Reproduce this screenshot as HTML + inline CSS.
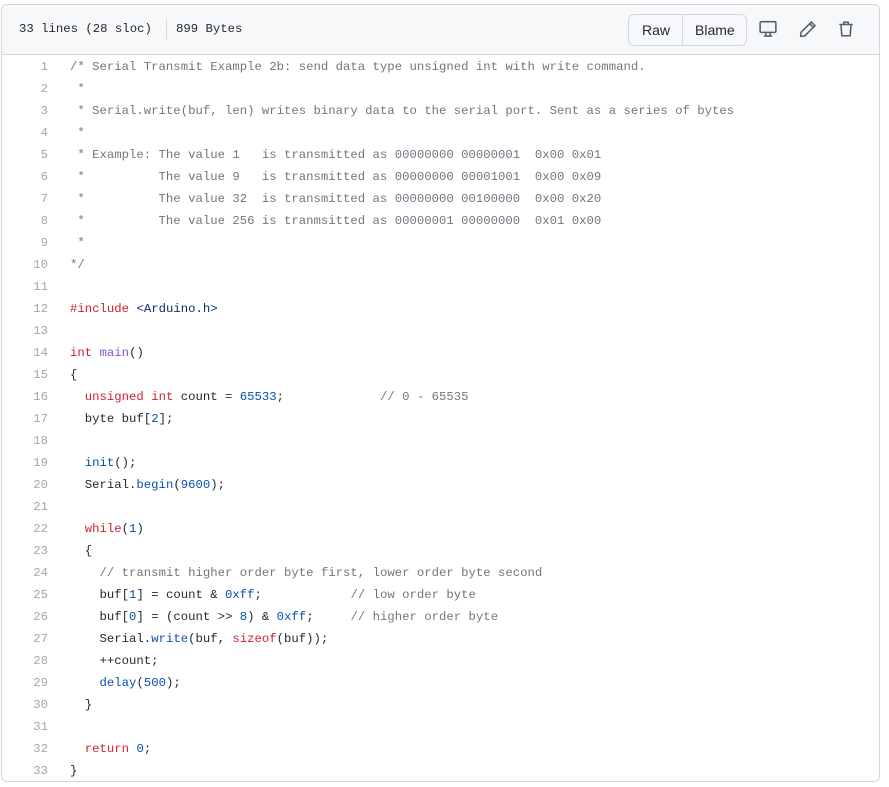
<!DOCTYPE html>
<html><head><meta charset="utf-8"><style>
body{margin:0;background:#fff;width:889px;height:787px;overflow:hidden}
.box{position:absolute;left:1px;top:4px;width:877px;height:776px;border:1px solid #d0d7de;border-radius:6px;overflow:hidden}
.hdr{height:49px;background:#f6f8fa;border-bottom:1px solid #d0d7de;position:relative;font-family:"Liberation Mono",monospace;font-size:12.3px;color:#24292f}
.hdr .t{position:absolute;left:17px;top:17px}
.sep{position:absolute;left:164px;top:14px;height:20px;border-left:1px solid #d0d7de}
.btns{position:absolute;left:626px;top:9px;height:30px;border:1px solid #d0d7de;border-radius:6px;background:#f6f8fa;font-family:"Liberation Sans",sans-serif;font-size:14px;display:flex}
.btns span{display:block;line-height:30px;padding:0 12px 0 13px}
.btns span+span{border-left:1px solid #d0d7de;padding:0 11px 0 12px}
.ic{position:absolute;top:15px}
.code{font-family:"Liberation Mono",monospace;font-size:12.3px;line-height:22px;color:#24292f;padding-top:1px}
.l{display:flex;height:22px;white-space:pre}
.n{width:46px;text-align:right;color:#a0a8b0;flex:none;padding-right:22px}
.c{color:#6e7781}.k{color:#cf222e}.b{color:#0550ae}.p{color:#8250df}.s{color:#0a3069}
</style></head><body>
<div class="box">
<div class="hdr"><span class="t">33 lines (28 sloc)</span><div class="sep"></div><span class="t" style="left:174px">899 Bytes</span>
<div class="btns"><span>Raw</span><span>Blame</span></div>
<svg class="ic" style="left:757px" width="18" height="18" viewBox="0 0 16 16" fill="none" stroke="#57606a" stroke-width="1.4"><rect x="1" y="1.5" width="14" height="9.5" rx="1"/><path d="M6 11v3M10 11v3M4.5 14.3h7"/></svg>
<svg class="ic" style="left:797px" width="18" height="18" viewBox="0 0 16 16" fill="none" stroke="#57606a" stroke-width="1.4"><path d="M11 1.8l3.2 3.2L5 14.2 1.5 14.5 1.8 11z M9.5 3.3l3.2 3.2"/></svg>
<svg class="ic" style="left:835px" width="18" height="18" viewBox="0 0 16 16" fill="none" stroke="#57606a" stroke-width="1.4"><path d="M2 4h12M6 4V2h4v2M3.5 4l.8 10h7.4l.8-10"/></svg>
</div>
<div class="code">
<div class="l"><span class="n">1</span><span class="c">/* Serial Transmit Example 2b: send data type unsigned int with write command.</span></div>
<div class="l"><span class="n">2</span><span class="c"> *</span></div>
<div class="l"><span class="n">3</span><span class="c"> * Serial.write(buf, len) writes binary data to the serial port. Sent as a series of bytes</span></div>
<div class="l"><span class="n">4</span><span class="c"> *</span></div>
<div class="l"><span class="n">5</span><span class="c"> * Example: The value 1   is transmitted as 00000000 00000001  0x00 0x01</span></div>
<div class="l"><span class="n">6</span><span class="c"> *          The value 9   is transmitted as 00000000 00001001  0x00 0x09</span></div>
<div class="l"><span class="n">7</span><span class="c"> *          The value 32  is transmitted as 00000000 00100000  0x00 0x20</span></div>
<div class="l"><span class="n">8</span><span class="c"> *          The value 256 is tranmsitted as 00000001 00000000  0x01 0x00</span></div>
<div class="l"><span class="n">9</span><span class="c"> *</span></div>
<div class="l"><span class="n">10</span><span class="c">*/</span></div>
<div class="l"><span class="n">11</span><span></span></div>
<div class="l"><span class="n">12</span><span><span class="k">#include</span> <span class="s">&lt;Arduino.h&gt;</span></span></div>
<div class="l"><span class="n">13</span><span></span></div>
<div class="l"><span class="n">14</span><span><span class="k">int</span> <span class="p">main</span>()</span></div>
<div class="l"><span class="n">15</span><span>{</span></div>
<div class="l"><span class="n">16</span><span>  <span class="k">unsigned</span> <span class="k">int</span> count = <span class="b">65533</span>;             <span class="c">// 0 - 65535</span></span></div>
<div class="l"><span class="n">17</span><span>  byte buf[<span class="b">2</span>];</span></div>
<div class="l"><span class="n">18</span><span></span></div>
<div class="l"><span class="n">19</span><span>  <span class="b">init</span>();</span></div>
<div class="l"><span class="n">20</span><span>  Serial.<span class="b">begin</span>(<span class="b">9600</span>);</span></div>
<div class="l"><span class="n">21</span><span></span></div>
<div class="l"><span class="n">22</span><span>  <span class="k">while</span>(<span class="b">1</span>)</span></div>
<div class="l"><span class="n">23</span><span>  {</span></div>
<div class="l"><span class="n">24</span><span>    <span class="c">// transmit higher order byte first, lower order byte second</span></span></div>
<div class="l"><span class="n">25</span><span>    buf[<span class="b">1</span>] = count &amp; <span class="b">0xff</span>;            <span class="c">// low order byte</span></span></div>
<div class="l"><span class="n">26</span><span>    buf[<span class="b">0</span>] = (count &gt;&gt; <span class="b">8</span>) &amp; <span class="b">0xff</span>;     <span class="c">// higher order byte</span></span></div>
<div class="l"><span class="n">27</span><span>    Serial.<span class="b">write</span>(buf, <span class="k">sizeof</span>(buf));</span></div>
<div class="l"><span class="n">28</span><span>    ++count;</span></div>
<div class="l"><span class="n">29</span><span>    <span class="b">delay</span>(<span class="b">500</span>);</span></div>
<div class="l"><span class="n">30</span><span>  }</span></div>
<div class="l"><span class="n">31</span><span></span></div>
<div class="l"><span class="n">32</span><span>  <span class="k">return</span> <span class="b">0</span>;</span></div>
<div class="l"><span class="n">33</span><span>}</span></div>
</div>
</div>
</body></html>
